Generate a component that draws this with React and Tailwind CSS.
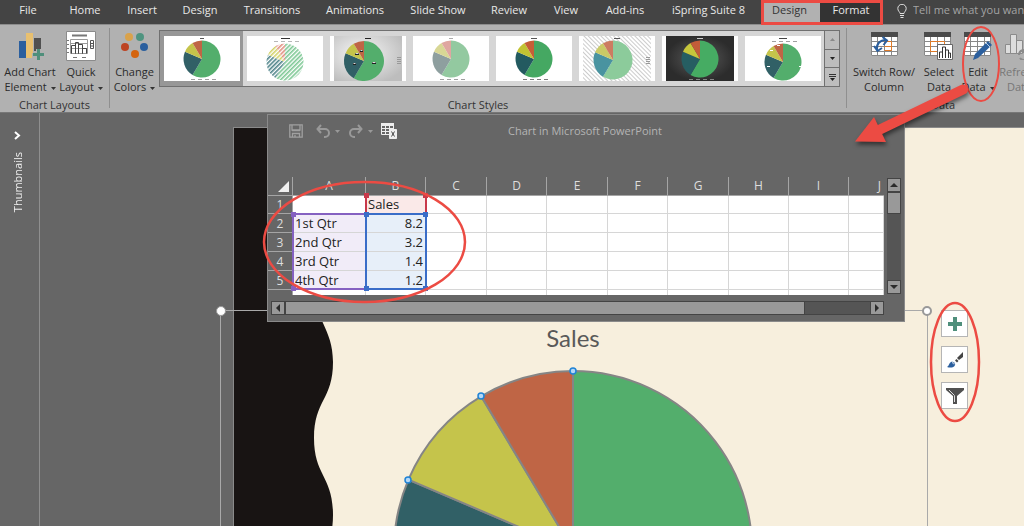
const tabs = [
    { label: "File", width: "w-14" },
    { label: "Home", width: "w-[58px]" },
    { label: "Insert", width: "w-14" },
    { label: "Design", width: "w-[60px]" },
    { label: "Transitions", width: "w-[84px]" },
    { label: "Animations", width: "w-[82px]" },
    { label: "Slide Show", width: "w-[84px]" },
    { label: "Review", width: "w-[58px]" },
    { label: "View", width: "w-14" },
    { label: "Add-ins", width: "w-[62px]" },
    { label: "iSpring Suite 8", width: "w-[105px]" },
];

const sales = [
    { quarter: "1st Qtr", value: 8.2 },
    { quarter: "2nd Qtr", value: 3.2 },
    { quarter: "3rd Qtr", value: 1.4 },
    { quarter: "4th Qtr", value: 1.2 },
];

const columns = ["A", "B", "C", "D", "E", "F", "G", "H", "I", "J"];
const baseColors = ["#53ae6c", "#316066", "#c5c44b", "#bf6545"];

const total = sales.reduce((sum, row) => sum + row.value, 0);

const pointAt = (cx, cy, r, share) => {
    const angle = share * 2 * Math.PI;
    return [cx + r * Math.sin(angle), cy - r * Math.cos(angle)];
};

const Pie = ({ cx, cy, r, fills = baseColors, ...rest }) => {
    let start = 0;
    return (
        <g {...rest}>
            {sales.map((row, i) => {
                const end = start + row.value / total;
                const [x1, y1] = pointAt(cx, cy, r, start);
                const [x2, y2] = pointAt(cx, cy, r, end);
                const large = end - start > 0.5 ? 1 : 0;
                start = end;
                return (
                    <path
                        key={row.quarter}
                        d={`M${cx} ${cy}L${x1} ${y1}A${r} ${r} 0 ${large} 1 ${x2} ${y2}Z`}
                        fill={fills[i]}
                    />
                );
            })}
        </g>
    );
};

const Caret = () => (
    <svg width="5" height="3" viewBox="0 0 5 3" className="ml-1 inline-block align-middle">
        <path d="M0 0h5L2.5 3z" fill="#333" />
    </svg>
);

const TopLegend = ({ y, color = "#777" }) => (
    <path d={`M27 ${y}h4m3 0h4m3 0h4m3 0h4`} stroke={color} strokeWidth="1" strokeOpacity="0.7" />
);

const thumbs = [
    {
        name: "Style 1",
        art: (
            <>
                <path d="M36 2.500h4" stroke="#555" />
                <Pie cx={38} cy={23} r={18.5} />
                <TopLegend y={43.5} />
            </>
        ),
    },
    {
        name: "Style 2",
        art: (
            <>
                <path d="M34 2.500h9" stroke="#333" />
                <TopLegend y={5.5} color="#999" />
                <Pie cx={38} cy={26} r={18.5} fills={["url(#h0)", "url(#h1)", "url(#h2)", "url(#h3)"]} />
            </>
        ),
    },
    {
        name: "Style 3",
        art: (
            <>
                <rect x="4" width="68" height="45" fill="url(#silver)" />
                <path d="M35 2.500h6" stroke="#222" />
                <Pie cx={34} cy={25} r={20} />
                <path d="M42 27h4M23 28h3M25 18h4M30 15h3" stroke="#222" strokeWidth="2" />
                <path d="M42.500 26.500h3M23.500 27.500h2M25.500 17.500h3M30.500 14.500h2" stroke="#ddd" />
                <path d="M67 21.500h4m-4 2h4m-4 2h4m-4 2h4" stroke="#999" />
            </>
        ),
    },
    {
        name: "Style 4",
        art: (
            <>
                <path d="M36 2.500h4" stroke="#aaa" />
                <Pie cx={38} cy={23} r={18.5} fills={["#93c9a0", "#8e9f9f", "#d8d795", "#dfa6a0"]} />
                <TopLegend y={43.5} />
            </>
        ),
    },
    {
        name: "Style 5",
        art: (
            <>
                <path d="M35 2.500h6" stroke="#555" />
                <Pie cx={38} cy={23} r={18.5} fills={["#45a862", "#235a60", "#c2c332", "#c55f36"]} />
                <TopLegend y={43.5} color="#444" />
            </>
        ),
    },
    {
        name: "Style 6",
        art: (
            <>
                <rect x="4" width="68" height="45" fill="url(#stripes)" />
                <path d="M35 2.500h6" stroke="#555" />
                <Pie cx={34} cy={24} r={19.5} fills={["#8ccb9b", "#4993a0", "#c9ca66", "#cc7c61"]} />
                <path d="M67 21.500h4m-4 2h4m-4 2h4m-4 2h4" stroke="#999" />
            </>
        ),
    },
    {
        name: "Style 7",
        art: (
            <>
                <rect x="4" width="68" height="45" fill="url(#coal)" />
                <path d="M35 2.500h6" stroke="#ccc" />
                <Pie cx={38} cy={23} r={18.5} fills={["#46ac63", "#265e62", "#c6c63b", "#c25c39"]} />
                <TopLegend y={43.5} color="#aaa" />
            </>
        ),
    },
    {
        name: "Style 8",
        art: (
            <>
                <path d="M34 2.500h8" stroke="#444" />
                <TopLegend y={5.5} />
                <Pie cx={38} cy={26} r={18.5} />
                <path d="M54 30.500h3M22 30.500h3M25 14.500h3M32 9.500h3" stroke="#fff" />
            </>
        ),
    },
];

const Gallery = () => (
    <div className="flex h-[57px] border border-[#707070] bg-[#d6d6d6]">
        {thumbs.map((thumb, i) => (
            <button
                key={thumb.name}
                aria-label={thumb.name}
                className={`flex w-[83px] items-center justify-center ${i === 0 ? "bg-[#979797]" : ""}`}
            >
                <svg width="76" height="45" viewBox="0 0 76 45" className="bg-white">
                    {thumb.art}
                </svg>
            </button>
        ))}
        <div className="flex w-[15px] flex-col border-l border-[#707070] bg-[#bdbdbd]">
            <button aria-label="Previous styles" className="flex flex-1 items-center justify-center">
                <svg width="5" height="3"><path d="M0 3h5L2.500 0z" fill="#8a8a8a" /></svg>
            </button>
            <button aria-label="Next styles" className="flex flex-1 items-center justify-center border-y border-[#707070]">
                <svg width="5" height="3"><path d="M0 0h5L2.500 3z" fill="#222" /></svg>
            </button>
            <button aria-label="More styles" className="flex flex-1 items-center justify-center">
                <svg width="7" height="7"><path d="M0 .5h7M0 2.500h7" stroke="#333" /><path d="M1 4h5L3.500 7z" fill="#222" /></svg>
            </button>
        </div>
    </div>
);

const RibbonButton = ({ icon, lines, caret, width, muted }) => (
    <button
        className={`flex shrink-0 flex-col items-center whitespace-nowrap leading-[15px] ${width} ${muted ? "text-[#777]" : "text-[#2b2b2b]"}`}
    >
        <span className="flex h-9 items-center">{icon}</span>
        <span>{lines[0]}</span>
        <span>{lines[1]}{caret && <Caret />}</span>
    </button>
);

const Separator = () => <div className="my-1 w-px shrink-0 bg-[#8f8f8f]" />;

const AddElementIcon = () => (
    <svg width="28" height="30" viewBox="-2 0 28 30">
        <path d="M1 10h7v17H1z" fill="#2b5f9e" />
        <path d="M16 7h7v13h-7z" fill="#505050" />
        <path d="M8 2h7v25H8z" fill="#e8c070" />
        <path d="M18 18h5v4h4v5h-4v3h-5v-3h-4v-5h4z" fill="#b1b1b1" />
        <path d="M19 18h3v4h4v3h-4v4h-3v-4h-4v-3h4z" fill="#4f8f7b" />
    </svg>
);

const QuickLayoutIcon = () => (
    <svg width="30" height="30" viewBox="0 0 30 30" fill="none" stroke="#555">
        <path d="M.5 .5h29v29H.5z" fill="#fff" stroke="#8b8b8b" />
        <path d="M6 4.500h15" strokeWidth="2" stroke="#777" />
        <path d="M4.500 8.500h17v14h-17zM4.500 12.500h17M4.500 17.500h17" stroke="#999" />
        <path d="M5.500 22.500v-8h4v8M9.500 22.500v-11h3v11M12.500 22.500v-9h4v9M16.500 22.500v-5h4v5" stroke="#444" />
        <path d="M24.500 9.500h3v8h-3zM24.500 12.500h3M24.500 15h3" />
        <path d="M7 26.500h4M16 26.500h4M1 9.500h2M1 13.500h2M1 17.500h2M1 21.500h2" stroke="#777" />
    </svg>
);

const ColorsIcon = () => (
    <svg width="28" height="28" viewBox="0 0 28 28">
        <circle cx="8" cy="5" r="4" fill="#d9a24b" />
        <circle cx="19" cy="5" r="4" fill="#4f9480" />
        <circle cx="4" cy="15" r="4" fill="#bd4424" />
        <circle cx="23" cy="15" r="4" fill="#2b5f9e" />
        <circle cx="14" cy="22" r="4" fill="#d4640e" />
    </svg>
);

const Sheet = () => (
    <>
        <path d="M0 3h27v21H0z" fill="#fff" />
        <path d="M0 0h27v5H0z" fill="#4b4b4b" />
        <path d="M0 9.500h27M0 14.500h27M0 19.500h27M6.500 5v19M13.500 5v19M20.500 5v19M.5 5v18.500h26V5" stroke="#888" fill="none" />
    </>
);

const SwitchIcon = () => (
    <svg width="27" height="28" viewBox="0 0 27 28">
        <Sheet />
        <path d="M13.500 9.500h7v9h-7M20.500 14.500h-7" stroke="#e07b28" fill="none" />
        <path d="M6 18C5 12 9 8 15 8" stroke="#2b5f9e" strokeWidth="2" fill="none" />
        <path d="M11.500 5L16 8.500 12.500 13M3 14l3.500 5L11 16" stroke="#2b5f9e" strokeWidth="2" fill="none" />
    </svg>
);

const SelectIcon = () => (
    <svg width="30" height="28" viewBox="0 0 30 28">
        <Sheet />
        <path d="M13 19.500H6.500v-10h14V12" stroke="#e07b28" fill="none" />
        <path d="M13.500 12.500h15v15h-15z" fill="#fff" stroke="#666" />
        <path d="M15.500 26v-6h3v6M18.500 26V15h3v11M21.500 26v-8h3v8M24.500 26v-5h2v5" stroke="#333" fill="none" />
    </svg>
);

const EditIcon = () => (
    <svg width="28" height="28" viewBox="0 0 28 28">
        <Sheet />
        <path d="M9 28l2-6L24 9l4 4-14 13z" fill="#2b5f9e" />
        <path d="M22 11l4 4" stroke="#b9cfe6" />
    </svg>
);

const RefreshIcon = () => (
    <svg width="28" height="28" viewBox="0 0 28 28" fill="#ddd" stroke="#8b8b8b">
        <path d="M.5 12.500h5v9h-5zM5.500 2.500h6v19h-6zM11.500 8.500h6v13h-6z" />
        <path d="M14 23a5 5 0 0 1 9-3M23 15v5h-5M24 23a5 5 0 0 1-9 3" fill="none" strokeWidth="2" />
    </svg>
);

const Ribbon = () => (
    <div className="flex h-[89px] shrink-0 overflow-hidden border-b border-[#777] bg-[#b1b1b1] shadow-[inset_0_1px_0_#8c8c8c]">
        <section className="flex w-[109px] shrink-0 flex-col pt-1">
            <div className="flex pl-1">
                <RibbonButton width="w-[52px]" icon={<AddElementIcon />} lines={["Add Chart", "Element"]} caret />
                <RibbonButton width="w-[50px]" icon={<QuickLayoutIcon />} lines={["Quick", "Layout"]} caret />
            </div>
            <h2 className="mt-[3px] text-center leading-4 text-[#333]">Chart Layouts</h2>
        </section>
        <Separator />
        <section className="flex w-[736px] shrink-0 flex-col pt-1">
            <div className="flex h-[66px]">
                <RibbonButton width="w-[49px]" icon={<ColorsIcon />} lines={["Change", "Colors"]} caret />
                <div className="pt-0.5"><Gallery /></div>
            </div>
            <h2 className="mt-[3px] text-center leading-4 text-[#333]">Chart Styles</h2>
        </section>
        <Separator />
        <section className="w-[192px] shrink-0 pt-1">
            <div className="flex">
                <RibbonButton width="w-[74px]" icon={<SwitchIcon />} lines={["Switch Row/", "Column"]} />
                <RibbonButton width="w-9" icon={<SelectIcon />} lines={["Select", "Data"]} />
                <RibbonButton width="w-[42px]" icon={<EditIcon />} lines={["Edit", "Data"]} caret />
                <RibbonButton width="w-10" icon={<RefreshIcon />} lines={["Refresh", "Data"]} muted />
            </div>
            <h2 className="mt-[3px] text-center leading-4 text-[#333]">Data</h2>
        </section>
    </div>
);

const TabBar = () => (
    <nav className="flex h-6 shrink-0 overflow-hidden bg-[#444] whitespace-nowrap text-[#e8e8e8]">
        {tabs.map((tab, i) => (
            <button key={i} className={`shrink-0 pb-[3px] ${tab.width}`}>{tab.label}</button>
        ))}
        <button className="ml-0.5 w-[57px] shrink-0 bg-[#b1b1b1] pr-1 pb-[3px] text-[#333]">Design</button>
        <button className="w-[62px] shrink-0 bg-[#333] pb-[3px]">Format</button>
        <label className="flex shrink-0 items-center gap-1.5 pb-[3px] pl-[15px] text-[#a3a3a3]">
            <svg width="10" height="14" viewBox="0 0 10 14" fill="none" stroke="#e0e0e0">
                <path d="M3 9.500C3 8 .8 7 .8 4.500a4.200 4.200 0 0 1 8.400 0C9.200 7 7 8 7 9.500zM3 11.500h4M3.500 13.500h3" />
            </svg>
            <input
                className="w-40 bg-transparent outline-none placeholder:text-[#a3a3a3]"
                placeholder="Tell me what you want to do"
                aria-label="Tell me what you want to do"
            />
        </label>
    </nav>
);

const Handle = ({ className }) => <span className={`absolute size-[5px] ${className}`} />;

const DataGrid = () => (
    <div className="relative h-[118px] min-w-0 flex-1 overflow-hidden">
        <table className="w-[616px] table-fixed border-separate border-spacing-0 text-[#222]">
            <colgroup>
                <col className="w-[25px]" />
                <col className="w-[73px]" />
                <col className="w-[60px]" />
                <col className="w-[61px]" />
                <col className="w-[60px]" />
                <col className="w-[61px]" />
                <col className="w-[60px]" />
                <col className="w-[61px]" />
                <col className="w-[60px]" />
                <col className="w-[60px]" />
                <col className="w-[35px]" />
            </colgroup>
            <thead>
                <tr className="h-[19px] text-xs text-[#dedede]">
                    <th className="border-r border-b border-[#a5a5a5] p-0">
                        <svg width="11" height="11" className="mr-[3px] ml-auto"><path d="M11 0v11H0z" fill="#f0f0f0" /></svg>
                    </th>
                    {columns.map((col) => (
                        <th
                            key={col}
                            className={`border-b border-[#a5a5a5] p-0 leading-[18px] font-normal ${col === "J" ? "pr-[3px] text-right" : "border-r"}`}
                        >
                            {col}
                        </th>
                    ))}
                </tr>
            </thead>
            <tbody>
                {[1, 2, 3, 4, 5].map((n) => (
                    <tr key={n} className={n === 1 ? "h-[18px]" : "h-[19px]"}>
                        <th className="border-r border-b border-[#a5a5a5] bg-[#666] p-0 text-xs leading-[17px] font-normal text-[#dedede]">{n}</th>
                        {columns.map((col) => {
                            const row = sales[n - 2];
                            let look = "bg-white p-0";
                            let text = "";
                            if (col === "A" && row) {
                                look = "bg-[#f1ecf8] py-0 pr-0 pl-0.5";
                                text = row.quarter;
                            }
                            if (col === "B") {
                                look = row ? "bg-[#e7eff9] py-0 pr-0.5 pl-0 text-right" : "bg-[#fae9e8] py-0 pr-0 pl-0.5";
                                text = row ? row.value.toFixed(1) : "Sales";
                            }
                            return (
                                <td
                                    key={col}
                                    className={`border-r border-b border-[#d6d6d6] text-[13px] leading-[17px] whitespace-nowrap ${look}`}
                                >
                                    {text}
                                </td>
                            );
                        })}
                    </tr>
                ))}
                <tr className="h-[5px]">
                    <th className="border-r border-[#a5a5a5] p-0" />
                    {columns.map((col) => <td key={col} className="border-r border-[#d6d6d6] bg-white p-0" />)}
                </tr>
            </tbody>
        </table>

        {/* Coloured outlines of the chart's source ranges */}
        <div className="absolute top-[36px] left-6 h-[77px] w-[74px] border-y-2 border-l-2 border-[#8561c1]">
            <Handle className="-top-[3px] -left-[3px] bg-[#8561c1]" />
            <Handle className="-bottom-[3px] -left-[3px] bg-[#8561c1]" />
        </div>
        <div className="absolute top-[19px] left-[97px] h-[18px] w-[62px] border-x-2 border-[#c8384a]">
            <Handle className="-top-[3px] -left-[3px] bg-[#c8384a]" />
            <Handle className="-top-[3px] -right-[3px] bg-[#c8384a]" />
        </div>
        <div className="absolute top-[36px] left-[97px] h-[77px] w-[62px] border-2 border-[#3a6dc8]">
            <Handle className="-top-[3px] -left-[3px] bg-[#3a6dc8]" />
            <Handle className="-top-[3px] -right-[3px] bg-[#3a6dc8]" />
            <Handle className="-bottom-[3px] -left-[3px] bg-[#3a6dc8]" />
            <Handle className="-right-[3px] -bottom-[3px] bg-[#3a6dc8]" />
        </div>
    </div>
);

const ScrollArrow = ({ label, d }) => (
    <button aria-label={label} className="flex size-[14px] shrink-0 items-center justify-center border border-[#444] bg-[#999]">
        <svg width="8" height="8" viewBox="0 0 8 8"><path d={d} fill="#2b2b2b" /></svg>
    </button>
);

const DataWindow = () => (
    <div className="absolute top-px left-[267px] flex h-[208px] w-[638px] flex-col border border-[#8a8a8a] bg-[#666]">
        <header className="flex h-[62px] shrink-0 items-start pt-2 pl-[21px]">
            <div className="flex w-[96px] items-center pt-px">
                <button aria-label="Save">
                    <svg width="14" height="14" viewBox="0 0 14 14" fill="none" stroke="#a0a0a0">
                        <path d="M.8 .8h12.400v12.400H.8zM3 1v5h8V1M3 6.500h8M3.500 13V9.500h7V13M6 11v2" strokeWidth="1.300" />
                    </svg>
                </button>
                <button aria-label="Undo" className="ml-[13px] flex items-center gap-[5px]">
                    <svg width="14" height="14" viewBox="0 0 14 14" fill="none" stroke="#999" strokeWidth="2">
                        <path d="M5 1L1.500 5 5 9M2 5h7a4 4 0 0 1 0 8H8" />
                    </svg>
                    <svg width="5" height="3"><path d="M0 0h5L2.500 3z" fill="#999" /></svg>
                </button>
                <button aria-label="Redo" className="ml-[9px] flex items-center gap-[5px]">
                    <svg width="14" height="14" viewBox="0 0 14 14" fill="none" stroke="#999" strokeWidth="2">
                        <path d="M9 1l3.500 4L9 9M12 5H5a4 4 0 0 0 0 8h1" />
                    </svg>
                    <svg width="5" height="3"><path d="M0 0h5L2.500 3z" fill="#999" /></svg>
                </button>
            </div>
            <button aria-label="Edit data in Excel" className="-ml-1">
                <svg width="16" height="16" viewBox="0 0 16 16" fill="none" stroke="#eee">
                    <path d="M.5 1.500h12v10H.5zM.5 5.500h12M.5 8.500h12M4.500 2v9M8.500 2v9" />
                    <path d="M0 0h13v3H0z" fill="#eee" stroke="none" />
                    <path d="M8.500 6.500h7v9h-7z" fill="#eee" />
                    <path d="M10.500 8.500l3 5M13.500 8.500l-3 5" stroke="#444" />
                </svg>
            </button>
            <h1 className="ml-[111px] leading-4 whitespace-nowrap text-[#b4b4b4]">Chart in Microsoft PowerPoint</h1>
        </header>
        <div className="flex">
            <DataGrid />
            <div className="mt-px mr-[3px] ml-[3px] flex h-[116px] w-[14px] flex-col bg-[#555]">
                <ScrollArrow label="Scroll up" d="M0 6h8L4 2z" />
                <div className="h-[22px] border border-[#444] bg-[#999]" />
                <div className="flex-1" />
                <ScrollArrow label="Scroll down" d="M0 2h8L4 6z" />
            </div>
        </div>
        <div className="mt-1.5 mr-5 ml-[3px] flex bg-[#555]">
            <ScrollArrow label="Scroll left" d="M6 0v8L2 4z" />
            <div className="w-[520px] border border-[#444] bg-[#999]" />
            <div className="flex-1 border-y border-[#444]" />
            <ScrollArrow label="Scroll right" d="M2 0v8l4-4z" />
        </div>
    </div>
);

const ChartTools = () => (
    <div className="absolute top-[197px] left-[941px] flex flex-col gap-[9px]">
        <button aria-label="Chart elements" className="flex size-[27px] items-center justify-center border border-[#b5b5b5] bg-white">
            <svg width="14" height="14"><path d="M5 0h4v5h5v4H9v5H5V9H0V5h5z" fill="#4f8f7b" /></svg>
        </button>
        <button aria-label="Chart styles" className="flex size-[27px] items-center justify-center border border-[#b5b5b5] bg-white">
            <svg width="18" height="18" viewBox="0 0 18 18">
                <path d="M17 1v5l-4 3-2-2z" fill="#444" />
                <path d="M10.500 8l2 2-1.500 1.500-2-2z" fill="#444" />
                <path d="M1 16c2-1 2-4 4-5 2-1 5 1 4 3-1 3-5 3-8 2z" fill="#2b5f9e" />
                <path d="M6 12c1-.8 2.500.3 2 1.300" stroke="#fff" fill="none" />
            </svg>
        </button>
        <button aria-label="Chart filters" className="flex size-[27px] items-center justify-center border border-[#b5b5b5] bg-white">
            <svg width="18" height="16" viewBox="0 0 18 16">
                <path d="M0 0h18v2l-7 6v8H7V8L0 2z" fill="#505050" />
                <path d="M3 2l5.500 5.500V14" stroke="#ddd" fill="none" />
            </svg>
        </button>
    </div>
);

const Slide = () => (
    <main className="relative mt-[14px] ml-[193px] flex-1 overflow-hidden border-t border-l border-[#8a8a8a] bg-[#f7efdd]">
        <svg width="110" height="480" viewBox="0 0 110 480" className="absolute top-0 left-0">
            <path
                d="M0 0H80V158C80 192 99 200 99 234C99 272 80 272 80 310C80 348 99 348 99 387C99 425 80 425 80 464V480H0Z"
                fill="#181413"
            />
        </svg>
        <h2 className="absolute top-[194px] left-[249px] w-[180px] text-center font-['Lato',sans-serif] text-2xl leading-8 text-[#595959]">
            Sales
        </h2>
        <svg width="370" height="370" viewBox="388 365 370 370" className="absolute top-[237px] left-[154px]" role="img" aria-label="Sales by quarter">
            <Pie cx={573} cy={550} r={179} stroke="#858585" strokeWidth="2" />
            <g fill="#b4d7f5" stroke="#1f83d6" strokeWidth="1.500">
                <circle cx="573" cy="371" r="3" />
                <circle cx="481" cy="396" r="3" />
                <circle cx="408" cy="480" r="3" />
            </g>
        </svg>
    </main>
);

const Annotations = () => (
    <svg width="1024" height="526" className="pointer-events-none absolute top-0 left-0" fill="none" stroke="#ec4b43">
        <rect x="762.500" y="1.500" width="119" height="22" strokeWidth="3" />
        <ellipse cx="981" cy="64" rx="18" ry="37" strokeWidth="2" />
        <g className="drop-shadow-[1px_3px_2px_rgba(0,0,0,0.5)]">
            <path d="M880 129.500L963 89.500" strokeWidth="10" strokeLinecap="round" />
            <path d="M855 141.500L874 117L886 142Z" fill="#ec4b43" stroke="none" />
        </g>
        <ellipse cx="364.500" cy="242" rx="100.500" ry="60" strokeWidth="2.500" />
        <ellipse cx="955" cy="362" rx="24" ry="59" strokeWidth="2.500" />
    </svg>
);

const Patterns = () => (
    <svg width="0" height="0" className="absolute">
        <defs>
            {["#7cc793", "#4d8288", "#d3d268", "#e08d7e"].map((color, i) => (
                <pattern key={color} id={`h${i}`} width="3" height="3" patternUnits="userSpaceOnUse" patternTransform="rotate(45)">
                    <rect width="3" height="3" fill="#fff" />
                    <rect width="1.600" height="3" fill={color} />
                </pattern>
            ))}
            <pattern id="stripes" width="3" height="3" patternUnits="userSpaceOnUse" patternTransform="rotate(-45)">
                <rect width="3" height="3" fill="#fff" />
                <rect width="1" height="3" fill="#ccc" />
            </pattern>
            <radialGradient id="silver" cx="0.4" cy="0.4" r="0.7">
                <stop offset="0" stopColor="#f7f7f7" />
                <stop offset="1" stopColor="#bdbdbd" />
            </radialGradient>
            <radialGradient id="coal">
                <stop offset="0" stopColor="#5c5c5c" />
                <stop offset="1" stopColor="#2c2c2c" />
            </radialGradient>
        </defs>
    </svg>
);

const App = () => {
    return (
        <div className="relative flex h-screen flex-col overflow-hidden bg-[#666] font-['Open_Sans',sans-serif] text-[11px]">
            <Patterns />
            <TabBar />
            <Ribbon />
            <div className="relative flex min-h-0 flex-1">
                <aside className="flex w-10 shrink-0 flex-col items-center border-r border-[#8f8f8f] pt-[18px] pr-1 text-[#eee]">
                    <button aria-label="Expand thumbnails">
                        <svg width="7" height="9" fill="none" stroke="#fff" strokeWidth="2"><path d="M1 1l4 3.500L1 8" /></svg>
                    </button>
                    <span className="mt-3 rotate-180 leading-4 [writing-mode:vertical-rl]">Thumbnails</span>
                </aside>
                <Slide />

                {/* Chart selection frame */}
                <div className="absolute top-[197px] left-[220px] h-[480px] w-[708px] border border-[#a9a9a9]">
                    <span className="absolute -top-[5px] -left-[5px] size-[10px] rounded-full border border-[#999] bg-white" />
                    <span className="absolute -top-[5px] -right-[5px] size-[10px] rounded-full border-2 border-[#999] bg-white" />
                </div>
                <ChartTools />
                <DataWindow />
            </div>
            <Annotations />
        </div>
    );
};

export default App;
